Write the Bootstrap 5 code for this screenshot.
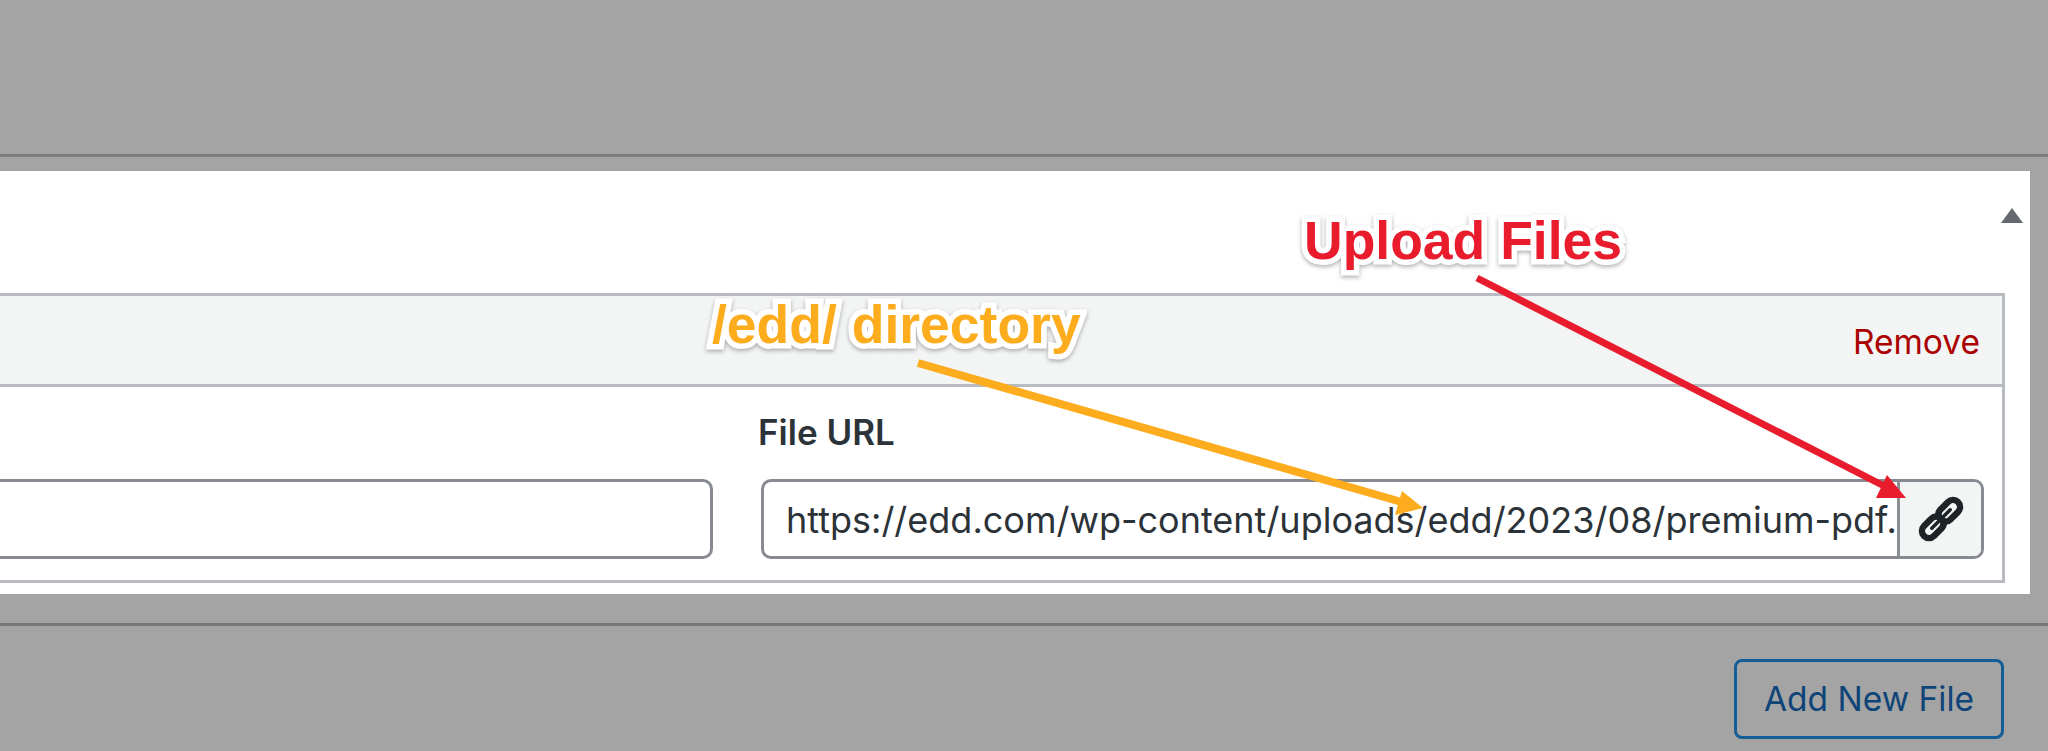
<!DOCTYPE html>
<html lang="en">
<head>
<meta charset="utf-8">
<title>Download files</title>
<link href="https://cdn.jsdelivr.net/npm/bootstrap@5.3.0/dist/css/bootstrap.min.css" rel="stylesheet">
<style>
html,body{height:751px;overflow:hidden}
body{background:#a4a4a4;font-family:Inter,"Liberation Sans",sans-serif;color:#2c3338;position:relative}
.top-band{height:157px;border-bottom:3px solid #7d7d7d}
.panel-box{margin-top:14px;margin-right:18px;height:423px;background:#fff;padding:122px 25px 12px 0;position:relative}
.collapse-tri{position:absolute;right:7px;top:37px;width:0;height:0;border-left:11px solid transparent;border-right:11px solid transparent;border-bottom:15px solid #646970}
.repeat-box{border:3px solid #b8bcc0;border-left:0;height:290px}
.repeat-head{height:91px;background:#f3f5f5;border-bottom:3px solid #b8bcc0;padding-right:22px;padding-top:5px;font-size:33.5px;color:#a00}
.repeat-body{height:194px;padding:0 18px 0 0}
.field-left{width:713px;margin-right:48px}
.field-right{flex:1;min-width:0}
.field-label{font-size:35px;font-weight:600;height:92px;padding-top:24px;line-height:42px;text-indent:-3px}
.url-group{height:80px;border:3px solid #878a90;border-radius:10px;font-size:36px;line-height:1;background:#fff;overflow:hidden}
.left-input{border-left:0;border-radius:0 10px 10px 0}
.url-text{flex:1;padding:2px 0 0 22px;white-space:nowrap;min-width:0}
.url-btn{flex:0 0 84px;height:100%;background:#f3f5f5;border-left:3px solid #8c8f94}
.bottom-rule{margin-top:29px;border-top:3px solid #787878}
.add-btn{margin:33px 44px 0 auto;width:270px;height:80px;border:3px solid #135e96;border-radius:8px;background:transparent;color:#0f4478;font-size:33.5px;padding:0;font-family:Inter,"Liberation Sans",sans-serif}
.note-text{position:absolute;font:700 53.5px/1 "Liberation Sans",sans-serif;white-space:nowrap;-webkit-text-stroke:11px #fff;paint-order:stroke fill;filter:drop-shadow(0 2px 2px rgba(0,0,0,.3))}
.note-red{color:#e81c2c;left:1304px;top:214px}
.note-orange{color:#fdac1e;left:712px;top:298px}
.arrow-layer{position:absolute;left:0;top:0;pointer-events:none}
</style>
</head>
<body>
<div class="top-band"></div>
<div class="panel-box">
  <span class="collapse-tri"></span>
  <div class="repeat-box">
    <div class="repeat-head d-flex align-items-center justify-content-end"><span>Remove</span></div>
    <div class="repeat-body d-flex">
      <div class="field-left">
        <div class="field-label"></div>
        <div class="url-group left-input"></div>
      </div>
      <div class="field-right">
        <div class="field-label">File URL</div>
        <div class="url-group d-flex align-items-center">
          <div class="url-text">https://edd.com/wp-content/uploads/edd/2023/08/premium-pdf.</div>
          <div class="url-btn d-flex align-items-center justify-content-center">
            <svg width="52" height="52" viewBox="-26 -26 52 52" fill="none" stroke="#1d2327" stroke-width="6.5" stroke-linecap="round">
              <g transform="rotate(-45)">
                <path d="M0-3Q2-7 6-7H17A7 7 0 0 1 17 7H6Q2 7 0 3"/>
                <path d="M0-3Q-2-7-6-7H-17A7 7 0 0 0-17 7H-6Q-2 7 0 3"/>
                <path d="M-13 0H13" stroke-width="3.5"/>
              </g>
            </svg>
          </div>
        </div>
      </div>
    </div>
  </div>
</div>
<div class="bottom-rule"></div>
<div class="d-flex"><button type="button" class="add-btn">Add New File</button></div>
<svg class="arrow-layer" width="2048" height="751" viewBox="0 0 2048 751">
  <line x1="1477" y1="278" x2="1888" y2="488" stroke="#e81c2c" stroke-width="7"/>
  <polygon points="1906,498 1876,498 1887,475" fill="#e81c2c"/>
  <line x1="918" y1="363" x2="1405" y2="503" stroke="#fdac1e" stroke-width="8"/>
  <polygon points="1423,508 1395,515 1402,491" fill="#fdac1e"/>
</svg>
<div class="note-text note-red">Upload Files</div>
<div class="note-text note-orange">/edd/ directory</div>
</body>
</html>
